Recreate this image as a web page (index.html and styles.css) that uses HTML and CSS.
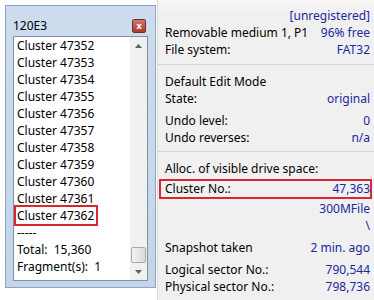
FILE: index.html
```html
<!DOCTYPE html>
<html>
<head>
    <meta charset="UTF-8">
    <meta name="viewport" content="width=device-width, initial-scale=1.0">
    <title>120E3</title>
    <link rel="stylesheet" href="styles.css">
</head>
<body>
    <div class="page">
        <div class="window">
            <div class="titlebar">
                <span class="title">120E3</span>
                <span class="close">x</span>
            </div>
            <div class="listbox">
                <div class="items">
                    <div class="item">Cluster 47352</div>
                    <div class="item">Cluster 47353</div>
                    <div class="item">Cluster 47354</div>
                    <div class="item">Cluster 47355</div>
                    <div class="item">Cluster 47356</div>
                    <div class="item">Cluster 47357</div>
                    <div class="item">Cluster 47358</div>
                    <div class="item">Cluster 47359</div>
                    <div class="item">Cluster 47360</div>
                    <div class="item">Cluster 47361</div>
                    <div class="item marked">Cluster 47362</div>
                    <div class="item">-----</div>
                    <div class="item">Total:&nbsp; 15,360</div>
                    <div class="item">Fragment(s):&nbsp; 1</div>
                </div>
                <div class="scrollbar">
                    <div class="sb-btn">
                        <svg width="7" height="4" viewBox="0 0 7 4"><path d="M0 4 L3.5 0 L7 4 Z" fill="#606060"/></svg>
                    </div>
                    <div class="sb-track"></div>
                    <div class="sb-thumb"></div>
                    <div class="sb-btn">
                        <svg width="7" height="4" viewBox="0 0 7 4"><path d="M0 0 L3.5 4 L7 0 Z" fill="#606060"/></svg>
                    </div>
                </div>
            </div>
        </div>

        <div class="info">
            <div class="section first">
                <div class="row"><span></span><span class="val">[unregistered]</span></div>
                <div class="row"><span>Removable medium 1, P1</span><span class="val">96% free</span></div>
                <div class="row"><span>File system:</span><span class="val">FAT32</span></div>
            </div>
            <div class="section">
                <div class="row"><span>Default Edit Mode</span></div>
                <div class="row"><span>State:</span><span class="val">original</span></div>
                <div class="row spaced"><span>Undo level:</span><span class="val">0</span></div>
                <div class="row"><span>Undo reverses:</span><span class="val">n/a</span></div>
            </div>
            <div class="section last">
                <div class="row"><span>Alloc. of visible drive space:</span></div>
                <div class="row boxed"><span>Cluster No.:</span><span class="val">47,363</span></div>
                <div class="row after-box"><span></span><span class="val">300MFile</span></div>
                <div class="row"><span></span><span class="val">\</span></div>
                <div class="row spaced"><span>Snapshot taken</span><span class="val">2 min. ago</span></div>
                <div class="row spaced"><span>Logical sector No.:</span><span class="val">790,544</span></div>
                <div class="row"><span>Physical sector No.:</span><span class="val">798,736</span></div>
            </div>
        </div>
    </div>
</body>
</html>
```

FILE: styles.css
```css
* {
    box-sizing: border-box;
    margin: 0;
    padding: 0;
}

body, html {
    width: 100%;
    height: 100%;
    overflow: hidden;
    background-color: #ffffff;
}

body {
    font-family: "Noto Sans", "Liberation Sans", sans-serif;
    font-size: 12px;
    color: #000;
}

.page {
    display: flex;
    height: 100%;
}

/* left window */
.window {
    margin: 5px 0 0 5px;
    width: 151px;
    height: 283px;
    border: 1px solid #8fa3bb;
    background: linear-gradient(#cddcee, #c3d5ea);
    padding: 0 7px 6px 7px;
    display: flex;
    flex-direction: column;
}

.titlebar {
    display: flex;
    align-items: center;
    justify-content: space-between;
    height: 13px;
    margin-top: 13px;
    margin-bottom: 4px;
}

.title {
    font-size: 12px;
    line-height: 13px;
}

.close {
    width: 14px;
    height: 14px;
    margin-right: 2px;
    border: 1px solid #6e2f26;
    border-radius: 2px;
    background: linear-gradient(#d27a6c, #a83c2e);
    color: #fff;
    font-size: 9px;
    font-weight: bold;
    line-height: 11px;
    text-align: center;
}

.listbox {
    flex: 1;
    display: flex;
    background: #fff;
    border: 1px solid #7f91a6;
}

.items {
    flex: 1;
    font-size: 12px;
    line-height: 17px;
}

.item {
    padding-left: 3px;
    white-space: nowrap;
}

.item.marked {
    width: 80px;
    margin-left: 2px;
    padding-left: 1px;
    outline: 2px solid #d9262f;
}

.scrollbar {
    width: 17px;
    display: flex;
    flex-direction: column;
    background: #f0f0f0;
}

.sb-btn {
    height: 17px;
    display: flex;
    align-items: center;
    justify-content: center;
}

.sb-track {
    flex: 1;
}

.sb-thumb {
    height: 16px;
    margin: 0 1px;
    border: 1px solid #a8a8a8;
    border-radius: 2px;
    background: linear-gradient(90deg, #f2f2f2, #dcdcdc);
}

/* right info panel */
.info {
    flex: 1;
    margin-left: 1px;
    border-left: 1px solid #dadada;
    background: linear-gradient(#f7f7f7 0, #f0f0f0 14px);
    font-size: 12px;
    line-height: 17px;
}

.section {
    padding: 8px 0 5px 0;
    border-bottom: 1px solid #d4d4d4;
}

.section.first {
    padding-top: 7px;
    padding-bottom: 6px;
}

.section.last {
    border-bottom: none;
}

.row {
    display: flex;
    justify-content: space-between;
    padding: 0 4px 0 7px;
    white-space: nowrap;
}

.row.spaced {
    margin-top: 5px;
}

.row.boxed {
    margin: 2px 2px 0 1px;
    padding: 0 0 0 4px;
    border: 2px solid #d9262f;
    line-height: 16px;
}

.row.after-box {
    margin-top: 1px;
}

.val {
    color: #2027a0;
}
```
